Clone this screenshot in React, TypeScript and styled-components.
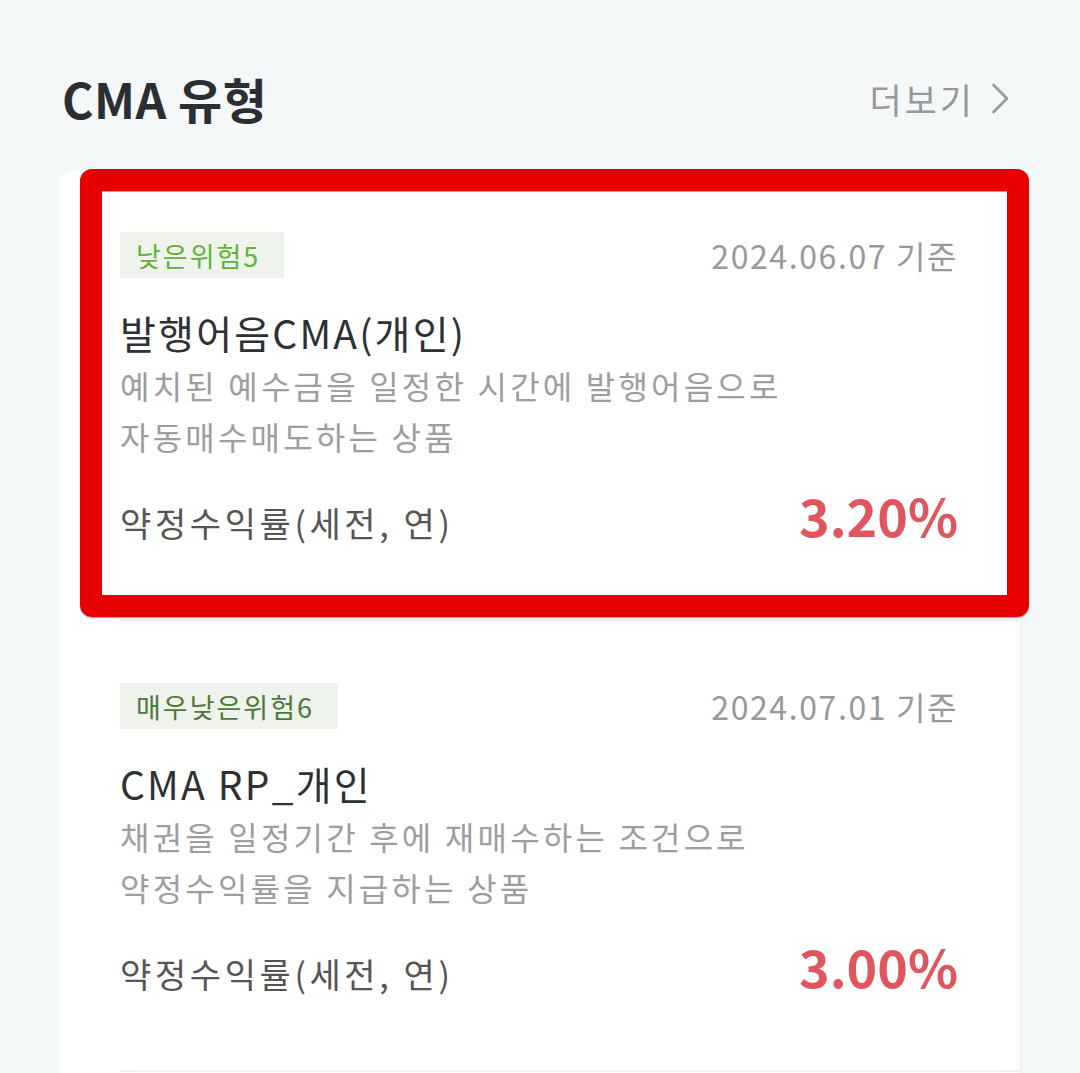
import React from "react";
import styled, { createGlobalStyle } from "styled-components";

const GlobalStyle = createGlobalStyle`
  html, body {
    margin: 0;
    padding: 0;
    background: #f5f8f9;
    overflow: hidden;
  }
  body {
    font-family: "Noto Sans CJK KR", "Noto Sans", sans-serif;
  }
`;

const Page = styled.div`
  padding: 0 60px;
  min-height: 1073px;
  box-sizing: border-box;
`;

const Header = styled.div`
  display: flex;
  align-items: center;
  justify-content: space-between;
  height: 64px;
  margin: 66px 0 40px;
  padding: 0 10px 0 2px;
`;

const Title = styled.h2`
  margin: 0;
  font-size: 48px;
  font-weight: 700;
  color: #2b2f33;
  letter-spacing: 0.5px;
`;

const MoreLink = styled.a`
  display: flex;
  align-items: center;
  gap: 16px;
  font-size: 35px;
  color: #999;
  letter-spacing: 3px;
  text-decoration: none;
`;

const Card = styled.div`
  background: #fff;
  border-radius: 14px 14px 0 0;
  box-shadow: 1px 0 0 #eef1f3;
  min-height: 920px;
`;

const Item = styled.div`
  position: relative;
  margin-left: 60px;
  padding: 62px 62px 69px 0;
  border-bottom: 2px solid #eef1f3;
`;

const Highlight = styled.div`
  position: absolute;
  top: -1px;
  left: -40px;
  right: -9px;
  bottom: 2px;
  border: 22px solid #e60000;
  border-radius: 12px;
  box-shadow: 0 1px 1px rgba(0, 0, 0, 0.35), inset 0 1px 0 rgba(0, 0, 0, 0.3);
  pointer-events: none;
`;

const TopRow = styled.div`
  display: flex;
  align-items: center;
  justify-content: space-between;
`;

const Badge = styled.span<{ $tone: "light" | "dark" }>`
  display: inline-flex;
  align-items: center;
  height: 46px;
  padding: 0 24px 0 16px;
  background: #eef3ec;
  font-size: 27px;
  letter-spacing: 2px;
  color: ${(p) => (p.$tone === "light" ? "#63b33a" : "#4c7a3b")};
`;

const DateText = styled.span`
  font-size: 32px;
  color: #999;
  letter-spacing: 1.6px;
`;

const Name = styled.div`
  margin-top: 28px;
  font-size: 39px;
  line-height: 52px;
  color: #2e3134;
  letter-spacing: 2.2px;
`;

const Desc = styled.p`
  margin: 2px 0 0;
  font-size: 32px;
  line-height: 51px;
  color: #9e9e9e;
  letter-spacing: 3.2px;
`;

const RateRow = styled.div`
  display: flex;
  align-items: baseline;
  justify-content: space-between;
  margin-top: 18px;
  height: 70px;
  line-height: 70px;
`;

const RateLabel = styled.span`
  font-size: 34px;
  color: #555;
  letter-spacing: 3.6px;
`;

const RateValue = styled.span`
  font-size: 52px;
  font-weight: 700;
  color: #e0565e;
`;

const Chevron = () => (
  <svg width="19" height="31" viewBox="0 0 19 31" fill="none">
    <path
      d="M2.5 2 L16 15.5 L2.5 29"
      stroke="#999"
      strokeWidth="2.6"
      strokeLinecap="round"
      strokeLinejoin="round"
    />
  </svg>
);

interface IProduct {
  risk: string;
  tone: "light" | "dark";
  date: string;
  name: string;
  desc: string[];
  rate: string;
  highlighted?: boolean;
}

const products: IProduct[] = [
  {
    risk: "낮은위험5",
    tone: "light",
    date: "2024.06.07 기준",
    name: "발행어음CMA(개인)",
    desc: ["예치된 예수금을 일정한 시간에 발행어음으로", "자동매수매도하는 상품"],
    rate: "3.20%",
    highlighted: true,
  },
  {
    risk: "매우낮은위험6",
    tone: "dark",
    date: "2024.07.01 기준",
    name: "CMA RP_개인",
    desc: ["채권을 일정기간 후에 재매수하는 조건으로", "약정수익률을 지급하는 상품"],
    rate: "3.00%",
  },
];

const App: React.FC = () => {
  return (
    <>
      <GlobalStyle />
      <Page>
        <Header>
          <Title>CMA 유형</Title>
          <MoreLink>
            더보기
            <Chevron />
          </MoreLink>
        </Header>
        <Card>
          {products.map((p) => (
            <Item key={p.name}>
              <TopRow>
                <Badge $tone={p.tone}>{p.risk}</Badge>
                <DateText>{p.date}</DateText>
              </TopRow>
              <Name>{p.name}</Name>
              <Desc>
                {p.desc[0]}
                <br />
                {p.desc[1]}
              </Desc>
              <RateRow>
                <RateLabel>약정수익률(세전, 연)</RateLabel>
                <RateValue>{p.rate}</RateValue>
              </RateRow>
              {p.highlighted && <Highlight />}
            </Item>
          ))}
        </Card>
      </Page>
    </>
  );
};

export default App;
